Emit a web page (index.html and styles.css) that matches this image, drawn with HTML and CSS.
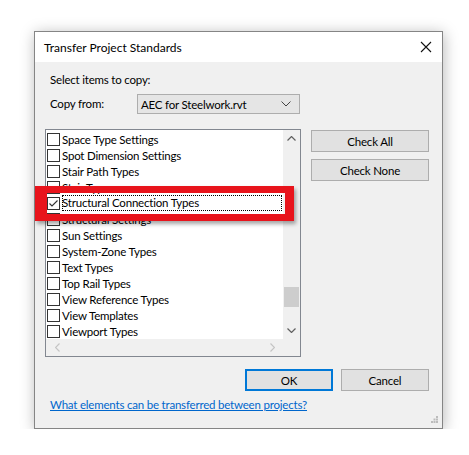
FILE: index.html
```html
<!DOCTYPE html>
<html lang="en">
<head>
  <meta charset="UTF-8">
  <title>Transfer Project Standards</title>
  <link rel="stylesheet" href="styles.css">
</head>
<body>

  <div class="dialog">
    <div class="titlebar">
      <span class="title">Transfer Project Standards</span>
      <svg class="close" width="12" height="12" viewBox="0 0 12 12">
        <path d="M1 1 L11 11 M11 1 L1 11" stroke="#111" stroke-width="1.1" fill="none"/>
      </svg>
    </div>

    <div class="body">
      <div class="label">Select items to copy:</div>

      <div class="copy-from">
        <span class="label from-label">Copy from:</span>
        <div class="combo">
          <span>AEC for Steelwork.rvt</span>
          <svg width="10" height="6" viewBox="0 0 10 6">
            <path d="M0.5 0.5 L5 5 L9.5 0.5" stroke="#444" stroke-width="1" fill="none"/>
          </svg>
        </div>
      </div>

      <div class="main">
        <div class="listbox">
          <div class="list-area">
            <ul class="items">
              <li><span class="check"></span>Space Type Settings</li>
              <li><span class="check"></span>Spot Dimension Settings</li>
              <li><span class="check"></span>Stair Path Types</li>
              <li><span class="check"></span>Stair Types</li>
              <li class="focused"><span class="check">
                <svg width="11" height="11" viewBox="0 0 11 11"><path d="M1.5 5.5 L4 8 L9.5 2.5" stroke="#333" stroke-width="1.1" fill="none"/></svg>
              </span><span class="focus-text">Structural Connection Types</span></li>
              <li><span class="check"></span>Structural Settings</li>
              <li><span class="check"></span>Sun Settings</li>
              <li><span class="check"></span>System-Zone Types</li>
              <li><span class="check"></span>Text Types</li>
              <li><span class="check"></span>Top Rail Types</li>
              <li><span class="check"></span>View Reference Types</li>
              <li><span class="check"></span>View Templates</li>
              <li><span class="check"></span>Viewport Types</li>
            </ul>
            <div class="vscroll">
              <div class="arrow">
                <svg width="9" height="5" viewBox="0 0 9 5"><path d="M0.5 4.5 L4.5 0.5 L8.5 4.5" stroke="#606060" stroke-width="1.2" fill="none"/></svg>
              </div>
              <div class="track"><div class="thumb"></div></div>
              <div class="arrow">
                <svg width="9" height="5" viewBox="0 0 9 5"><path d="M0.5 0.5 L4.5 4.5 L8.5 0.5" stroke="#606060" stroke-width="1.2" fill="none"/></svg>
              </div>
            </div>
          </div>
          <div class="hscroll">
            <div class="harrows">
              <svg width="5" height="9" viewBox="0 0 5 9"><path d="M4.5 0.5 L0.5 4.5 L4.5 8.5" stroke="#c4c4c4" stroke-width="1.2" fill="none"/></svg>
              <svg width="5" height="9" viewBox="0 0 5 9"><path d="M0.5 0.5 L4.5 4.5 L0.5 8.5" stroke="#c4c4c4" stroke-width="1.2" fill="none"/></svg>
            </div>
            <div class="corner"></div>
          </div>
        </div>

        <div class="side-buttons">
          <button class="btn">Check All</button>
          <button class="btn">Check None</button>
        </div>
      </div>

      <div class="actions">
        <button class="btn default">OK</button>
        <button class="btn">Cancel</button>
      </div>

      <a class="help-link" href="#">What elements can be transferred between projects?</a>
    </div>

    <svg class="grip" width="7" height="7" viewBox="0 0 7 7">
      <rect x="5" y="0" width="2" height="2" fill="#bcbcbc"/>
      <rect x="2.5" y="2.5" width="2" height="2" fill="#bcbcbc"/>
      <rect x="5" y="2.5" width="2" height="2" fill="#bcbcbc"/>
      <rect x="0" y="5" width="2" height="2" fill="#bcbcbc"/>
      <rect x="2.5" y="5" width="2" height="2" fill="#bcbcbc"/>
      <rect x="5" y="5" width="2" height="2" fill="#bcbcbc"/>
    </svg>
  </div>

  <!-- highlight around the selected row -->
  <div class="callout"></div>

</body>
</html>
```

FILE: styles.css
```css
body {
  margin: 0;
  padding: 31px 0 0 34px;
  background: #ffffff;
  font-family: Lato, "Noto Sans", sans-serif;
  font-size: 11.5px;
  letter-spacing: -0.2px;
  color: #000;
}
.dialog {
  position: relative;
  width: 407px;
  height: 396px;
  border: 1px solid #858585;
  background: #f0f0f0;
  box-shadow: 1px 2px 14px rgba(0,0,0,0.28);
}
.titlebar {
  height: 30px;
  background: #ffffff;
  display: flex;
  align-items: center;
  justify-content: space-between;
  padding: 0 10px 0 9px;
}
.title {
  font-size: 12px;
  letter-spacing: 0;
}
.body {
  padding: 10px 13px 0 10px;
}
.label {
  line-height: 16px;
  padding-left: 5px;
}
.copy-from {
  display: flex;
  align-items: center;
  margin-top: 6px;
}
.from-label {
  width: 87px;
}
.combo {
  width: 150px;
  height: 18px;
  border: 1px solid #adadad;
  background: #e5e5e5;
  display: flex;
  align-items: center;
  justify-content: space-between;
  padding: 0 8px 0 3px;
}
.main {
  display: flex;
  gap: 10px;
  margin-top: 15px;
}
.listbox {
  width: 254px;
  height: 226px;
  border: 1px solid #828790;
  background: #ffffff;
  display: flex;
  flex-direction: column;
}
.list-area {
  display: flex;
  height: 209px;
}
.items {
  flex: 1;
  list-style: none;
  margin: 0;
  padding: 1px 0 0 1px;
  overflow: hidden;
}
.items li {
  height: 16px;
  display: flex;
  align-items: center;
  white-space: nowrap;
}
.check {
  width: 13px;
  height: 13px;
  box-sizing: border-box;
  border: 1px solid #333;
  background: #fff;
  margin-right: 2px;
  display: flex;
  align-items: center;
  justify-content: center;
  flex-shrink: 0;
}
.focus-text {
  flex: 1;
  outline: 1px dotted #000;
  outline-offset: -1px;
  line-height: 16px;
  margin-right: 1px;
}
.vscroll {
  width: 17px;
  background: #f0f0f0;
  display: flex;
  flex-direction: column;
}
.arrow {
  height: 17px;
  display: flex;
  align-items: center;
  justify-content: center;
}
.track {
  flex: 1;
  display: flex;
  flex-direction: column;
  justify-content: flex-end;
  padding: 0 1px 15px 1px;
}
.thumb {
  height: 20px;
  background: #cdcdcd;
}
.hscroll {
  height: 17px;
  display: flex;
  background: #f0f0f0;
}
.harrows {
  flex: 1;
  display: flex;
  align-items: center;
  justify-content: space-between;
  padding: 0 8px 0 9px;
}
.corner {
  width: 17px;
  background: #f0f0f0;
}
.side-buttons {
  display: flex;
  flex-direction: column;
  gap: 7px;
  padding-top: 1px;
}
.btn {
  font-family: Lato, "Noto Sans", sans-serif;
  font-size: 11.5px;
  letter-spacing: -0.2px;
  color: #000;
  background: #e1e1e1;
  border: 1px solid #adadad;
  height: 22px;
  padding: 0;
  border-radius: 0;
}
.side-buttons .btn {
  width: 118px;
}
.actions {
  display: flex;
  justify-content: flex-end;
  gap: 8px;
  margin-top: 12px;
}
.actions .btn {
  width: 88px;
}
.btn.default {
  border: 2px solid #0078d7;
}
.help-link {
  display: inline-block;
  margin: 6px 0 0 5px;
  line-height: 16px;
  color: #0066cc;
  text-decoration: underline;
}
.grip {
  position: absolute;
  right: 4px;
  bottom: 5px;
}
.callout {
  position: absolute;
  left: 35px;
  top: 186px;
  width: 238px;
  height: 21px;
  border-style: solid;
  border-color: #e8141c;
  border-width: 7px 9px 7px 12px;
  box-shadow: 2px 3px 4px rgba(0,0,0,0.35);
}
```
